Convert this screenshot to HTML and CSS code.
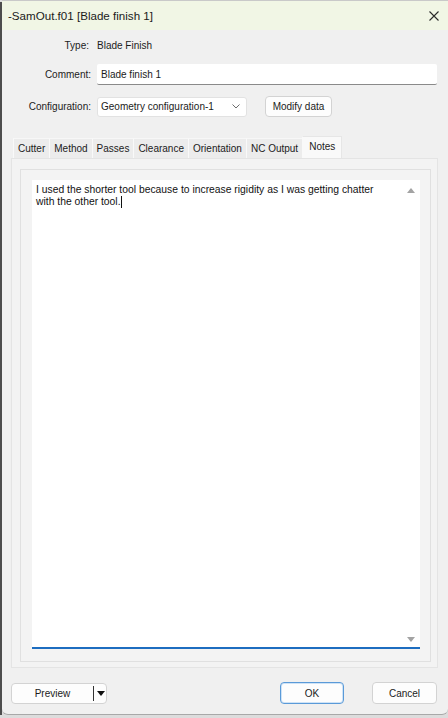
FILE: index.html
```html
<!DOCTYPE html>
<html>
<head>
<meta charset="utf-8">
<link rel="stylesheet" href="styles.css">
</head>
<body>
<div class="screen">
  <div class="edge"></div>
  <div class="window">
    <div class="titlebar">
      <span class="title">-SamOut.f01 [Blade finish 1]</span>
      <svg class="close" width="10" height="10" viewBox="0 0 10 10"><path d="M0.5 0.5L9.5 9.5M9.5 0.5L0.5 9.5" stroke="#2b2b2b" stroke-width="1.1" fill="none"/></svg>
    </div>
    <div class="form">
      <div class="row row-type">
        <span class="label">Type:</span>
        <span class="value">Blade Finish</span>
      </div>
      <div class="row row-comment">
        <span class="label">Comment:</span>
        <div class="input">Blade finish 1</div>
      </div>
      <div class="row row-config">
        <span class="label">Configuration:</span>
        <div class="config-controls">
          <div class="select">
            <span>Geometry configuration-1</span>
            <svg class="chev" width="8" height="5" viewBox="0 0 8 5"><path d="M0.5 0.5L4 4L7.5 0.5" stroke="#6d6d6d" stroke-width="1" fill="none"/></svg>
          </div>
          <div class="btn btn-modify">Modify data</div>
        </div>
      </div>
    </div>
    <div class="tabs">
      <div class="tab">Cutter</div>
      <div class="tab">Method</div>
      <div class="tab">Passes</div>
      <div class="tab">Clearance</div>
      <div class="tab">Orientation</div>
      <div class="tab">NC Output</div>
      <div class="tab active">Notes</div>
    </div>
    <div class="panel">
      <div class="group">
        <div class="notes">
          <div class="notes-text">I used the shorter tool because to increase rigidity as I was getting chatter<br>with the other tool.<span class="caret"></span></div>
          <div class="scroll">
            <svg width="8" height="5" viewBox="0 0 8 5"><path d="M0 5L4 0L8 5Z" fill="#a3a3a3"/></svg>
            <svg width="8" height="5" viewBox="0 0 8 5"><path d="M0 0L8 0L4 5Z" fill="#a3a3a3"/></svg>
          </div>
        </div>
      </div>
    </div>
    <div class="footer">
      <div class="btn split">
        <span class="split-label">Preview</span>
        <span class="split-sep"></span>
        <svg class="split-arrow" width="8" height="5" viewBox="0 0 8 5"><path d="M0 0L8 0L4 5Z" fill="#111"/></svg>
      </div>
      <div class="footer-right">
        <div class="btn btn-ok">OK</div>
        <div class="btn btn-cancel">Cancel</div>
      </div>
    </div>
  </div>
</div>
</body>
</html>
```

FILE: styles.css
```css
html, body {
  margin: 0;
  padding: 0;
}
body {
  width: 448px;
  height: 718px;
  background: #dcdcdc;
  font-family: "Liberation Sans", Arial, sans-serif;
  font-size: 10px;
  color: #1b1b1b;
  overflow: hidden;
}
.screen {
  display: flex;
  height: 718px;
}
.edge {
  width: 2px;
  background: #4d4d4d;
  height: 713px;
  margin-top: 2px;
}
.window {
  flex: 1;
  height: 715px;
  display: flex;
  flex-direction: column;
  background: #f0f0f0;
  border-bottom: 1px solid #a8a8a8;
  border-radius: 0 0 6px 6px;
  border-top: 1px solid #c9c9c9;
  box-sizing: border-box;
  overflow: hidden;
}
.titlebar {
  height: 29px;
  flex: none;
  background: #f1f6e5;
  display: flex;
  align-items: center;
  justify-content: space-between;
  padding: 0 9px 0 6px;
}
.title {
  font-size: 11.6px;
  color: #1a1a1a;
}
.close {
  display: block;
}
.form {
  padding-right: 11px;
}
.row {
  display: grid;
  grid-template-columns: 89px 1fr;
  column-gap: 6px;
  align-items: center;
}
.label {
  text-align: right;
  color: #222;
}
.row-type {
  margin-top: 5px;
  height: 20px;
}
.row-type .label {
  padding-right: 2px;
}
.row-comment {
  margin-top: 9px;
  height: 21px;
}
.input {
  height: 21px;
  box-sizing: border-box;
  background: #fff;
  border-bottom: 1px solid #8a8a8a;
  border-radius: 2px;
  padding: 0 4px;
  display: flex;
  align-items: center;
}
.row-config {
  margin-top: 11px;
  height: 21px;
}
.config-controls {
  display: flex;
  align-items: center;
  gap: 18px;
}
.select {
  width: 150px;
  height: 20px;
  box-sizing: border-box;
  background: #fff;
  border: 1px solid #e2e2e2;
  border-radius: 3px;
  display: flex;
  align-items: center;
  justify-content: space-between;
  padding: 0 6px 0 3px;
}
.chev {
  display: block;
}
.btn {
  box-sizing: border-box;
  background: #fdfdfd;
  border: 1px solid #d3d3d3;
  border-radius: 4px;
  display: flex;
  align-items: center;
  justify-content: center;
}
.btn-modify {
  width: 67px;
  height: 21px;
}
.tabs {
  display: flex;
  align-items: flex-end;
  margin: 19px 0 0 11px;
  height: 22px;
  flex: none;
}
.tab {
  height: 20px;
  box-sizing: border-box;
  padding: 0 4px;
  display: flex;
  align-items: center;
  background: #ececec;
  border-left: 1px solid #f9f9f9;
  border-top: 1px solid #f7f7f7;
}
.tab.active {
  height: 22px;
  background: #f9f9f9;
  padding: 0 6px 2px 6px;
  border-top: 1px solid #e6e6e6;
  border-right: 1px solid #e6e6e6;
}
.panel {
  flex: 1;
  margin: 0 10px 0 9px;
  background: #f3f3f3;
  border: 1px solid #e4e4e4;
  padding: 10px 6px 5px 8px;
  display: flex;
  min-height: 0;
}
.group {
  flex: 1;
  border: 1px solid #e0e0e0;
  padding: 10px 10px 12px 11px;
  display: flex;
}
.notes {
  flex: 1;
  background: #fff;
  border-bottom: 2px solid #1d6dc0;
  display: flex;
}
.notes-text {
  flex: 1;
  padding: 4px 4px;
  line-height: 12px;
  font-size: 10.35px;
  color: #111;
}
.caret {
  display: inline-block;
  width: 1px;
  height: 12px;
  background: #111;
  vertical-align: top;
}
.scroll {
  width: 16px;
  display: flex;
  flex-direction: column;
  justify-content: space-between;
  align-items: center;
  padding: 8px 1px 5px 0;
}
.scroll svg {
  display: block;
}
.footer {
  flex: none;
  display: flex;
  justify-content: space-between;
  align-items: center;
  padding: 14px 11px 10px 9px;
}
.split {
  width: 96px;
  height: 21px;
  justify-content: flex-start;
}
.split-label {
  width: 81px;
  text-align: center;
}
.split-sep {
  width: 1px;
  height: 15px;
  background: #333;
}
.split-arrow {
  display: block;
  margin-left: 3px;
}
.footer-right {
  display: flex;
  gap: 28px;
}
.btn-ok {
  width: 64px;
  height: 22px;
  border: 1px solid #5a9ad8;
  box-shadow: inset 0 0 0 1px #cfe3f6;
}
.btn-cancel {
  width: 65px;
  height: 22px;
}
```
